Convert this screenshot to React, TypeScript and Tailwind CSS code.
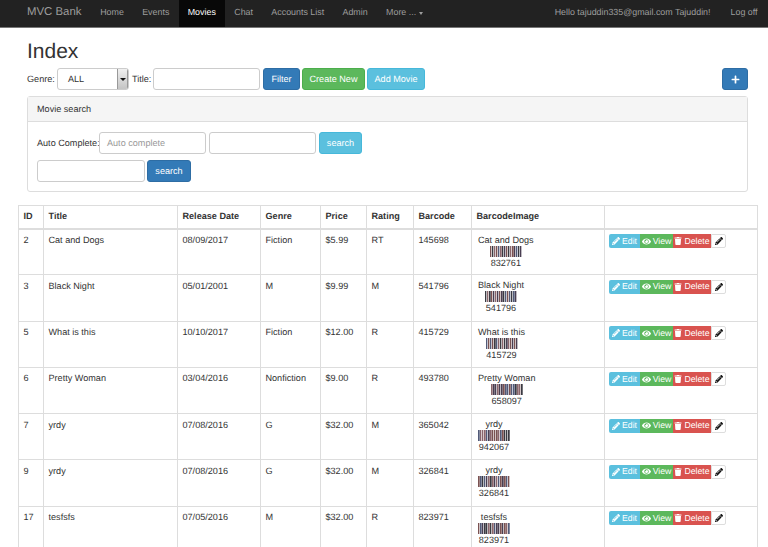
import { FaEye, FaPencilAlt, FaPlus, FaTrash } from 'react-icons/fa'

const links = ['Home', 'Events', 'Movies', 'Chat', 'Accounts List', 'Admin']

const movies = [
    { id: 2, title: 'Cat and Dogs', date: '08/09/2017', genre: 'Fiction', price: '$5.99', rating: 'RT', barcode: '145698', code: '832761' },
    { id: 3, title: 'Black Night', date: '05/01/2001', genre: 'M', price: '$9.99', rating: 'M', barcode: '541796', code: '541796' },
    { id: 5, title: 'What is this', date: '10/10/2017', genre: 'Fiction', price: '$12.00', rating: 'R', barcode: '415729', code: '415729' },
    { id: 6, title: 'Pretty Woman', date: '03/04/2016', genre: 'Nonfiction', price: '$9.00', rating: 'R', barcode: '493780', code: '658097' },
    { id: 7, title: 'yrdy', date: '07/08/2016', genre: 'G', price: '$32.00', rating: 'M', barcode: '365042', code: '942067' },
    { id: 9, title: 'yrdy', date: '07/08/2016', genre: 'G', price: '$32.00', rating: 'M', barcode: '326841', code: '326841' },
    { id: 17, title: 'tesfsfs', date: '07/05/2016', genre: 'M', price: '$32.00', rating: 'R', barcode: '823971', code: '823971' },
]

const Barcode = ({ code }: { code: string }) => {
    const colors = ['#4a3f52', '#7a5252', '#525a78', '#3a3a42', '#8a666c']
    const bars = Array.from({ length: 16 }, (_, i) => {
        const n = code.charCodeAt(i % 6) + i * 7
        return { x: i * 2, w: n % 3 === 0 ? 1.7 : 1.35, fill: colors[n % 5] }
    })
    return (
        <svg width="32" height="11" viewBox="0 0 32 11" className="block">
            {bars.map((b, i) => <rect key={i} x={b.x} y="0" width={b.w} height="11" fill={b.fill} />)}
        </svg>
    )
}

const App = () => {
    const th = 'border border-[#ddd] border-b-2 px-[4.5px] text-left font-bold align-middle'
    const td = 'border border-[#ddd] px-[4.5px] pt-[4.5px] align-top'
    const field = 'h-[22px] rounded-[3px] border border-[#ccc] bg-white'
    const btn = 'h-[22px] rounded-[3px] border text-white flex items-center justify-center'

    return (
        <div className="h-[547px] w-[768px] overflow-hidden bg-white font-['Liberation_Sans',Arial,sans-serif] text-[9.1px] leading-[13px] text-[#333] [text-rendering:geometricPrecision]">
            <nav className="flex h-[28px] items-stretch border-b border-[#777] bg-[#222] pb-[2px] pl-[27px] text-[8.9px] text-[#9d9d9d]">
                <span className="mr-[9.5px] flex items-center text-[11.4px]">MVC Bank</span>
                {links.map(l => (
                    <span key={l} className={l === 'Movies' ? '-mb-[2px] flex items-center bg-[#080808] px-[9.2px] pb-[2px] text-white' : 'flex items-center px-[9.2px]'}>{l}</span>
                ))}
                <span className="flex items-center gap-[3px] px-[9.2px]">
                    More ...
                    <span className="mt-[1px] border-x-[2.5px] border-t-[3px] border-x-transparent border-t-[#9d9d9d]" />
                </span>
                <span className="ml-auto flex items-center pr-[10.5px]">Hello tajuddin335@gmail.com Tajuddin!</span>
                <span className="flex items-center pl-[9.5px] pr-[10.5px]">Log off</span>
            </nav>

            <div className="pl-[27px] pr-[20px]">
                <h1 className="mt-[12px] text-[21px] leading-[24px] text-[#333]">Index</h1>
                <div className="mt-[4px] flex items-center">
                    <span className="w-[30px]">Genre:</span>
                    <div className={`${field} flex w-[72px] items-stretch overflow-hidden`}>
                        <span className="flex flex-1 items-center pl-[10px]">ALL</span>
                        <span className="flex w-[11px] items-center justify-center border-x border-[#999] bg-gradient-to-b from-[#f0f0f0] to-[#c4c4c4]">
                            <span className="border-x-[3px] border-t-[3px] border-x-transparent border-t-[#111]" />
                        </span>
                    </div>
                    <span className="ml-[3px] w-[21px]">Title:</span>
                    <div className={`${field} w-[107px]`} />
                    <div className={`${btn} ml-[3px] w-[37px] border-[#2e6da4] bg-[#337ab7]`}>Filter</div>
                    <div className={`${btn} ml-[2px] w-[63px] border-[#4cae4c] bg-[#5cb85c]`}>Create New</div>
                    <div className={`${btn} ml-[2px] w-[58px] border-[#46b8da] bg-[#5bc0de]`}>Add Movie</div>
                    <div className={`${btn} ml-auto w-[26px] border-[#2e6da4] bg-[#337ab7]`}><FaPlus size={9} /></div>
                </div>

                <div className="mt-[6px] h-[96px] rounded-[3px] border border-[#ddd]">
                    <div className="flex h-[25px] items-center border-b border-[#ddd] bg-[#f5f5f5] px-[9px]">Movie search</div>
                    <div className="px-[9px] pt-[10px]">
                        <div className="flex items-center">
                            <span className="w-[62px] whitespace-nowrap">Auto Complete:</span>
                            <div className={`${field} flex w-[107px] items-center pl-[7px] text-[#999]`}>Auto complete</div>
                            <div className={`${field} ml-[3px] w-[107px]`} />
                            <div className={`${btn} ml-[3px] w-[43px] border-[#46b8da] bg-[#5bc0de]`}>search</div>
                        </div>
                        <div className="mt-[6px] flex items-center">
                            <div className={`${field} w-[108px]`} />
                            <div className={`${btn} ml-[2px] w-[44px] border-[#2e6da4] bg-[#337ab7]`}>search</div>
                        </div>
                    </div>
                </div>
            </div>

            <table className="ml-[18px] mt-[13px] w-[739px] table-fixed border-collapse">
                <colgroup>
                    <col className="w-[25px]" />
                    <col className="w-[134px]" />
                    <col className="w-[83px]" />
                    <col className="w-[60px]" />
                    <col className="w-[46px]" />
                    <col className="w-[47px]" />
                    <col className="w-[58px]" />
                    <col className="w-[133px]" />
                    <col className="w-[153px]" />
                </colgroup>
                <thead>
                    <tr className="h-[23px]">
                        <th className={th}>ID</th>
                        <th className={th}>Title</th>
                        <th className={th}>Release Date</th>
                        <th className={th}>Genre</th>
                        <th className={th}>Price</th>
                        <th className={th}>Rating</th>
                        <th className={th}>Barcode</th>
                        <th className={th}>BarcodeImage</th>
                        <th className={th}></th>
                    </tr>
                </thead>
                <tbody>
                    {movies.map(m => (
                        <tr key={m.id} className="h-[46.3px]">
                            <td className={td}>{m.id}</td>
                            <td className={td}>{m.title}</td>
                            <td className={td}>{m.date}</td>
                            <td className={td}>{m.genre}</td>
                            <td className={td}>{m.price}</td>
                            <td className={td}>{m.rating}</td>
                            <td className={td}>{m.barcode}</td>
                            <td className={`${td} !pl-[6px] !pt-[4px]`}>
                                <div className="inline-flex flex-col items-center leading-[12px]">
                                    <span>{m.title}</span>
                                    <Barcode code={m.code} />
                                    <span>{m.code}</span>
                                </div>
                            </td>
                            <td className={`${td} !pl-[4px] !pt-[4.5px]`}>
                                <div className="flex h-[14px] items-stretch text-[8.7px] text-white">
                                    <span className="flex w-[31px] items-center justify-center gap-[2px] rounded-l-[2px] bg-[#5bc0de]"><FaPencilAlt size={8} />Edit</span>
                                    <span className="flex w-[33px] items-center justify-center gap-[2px] bg-[#5cb85c]"><FaEye size={9} />View</span>
                                    <span className="flex w-[38px] items-center justify-center gap-[2px] bg-[#d9534f]"><FaTrash size={8} />Delete</span>
                                    <span className="flex w-[15px] items-center justify-center rounded-r-[2px] border border-[#ddd] bg-white text-[#111]"><FaPencilAlt size={8} /></span>
                                </div>
                            </td>
                        </tr>
                    ))}
                </tbody>
            </table>
        </div>
    )
}

export default App
